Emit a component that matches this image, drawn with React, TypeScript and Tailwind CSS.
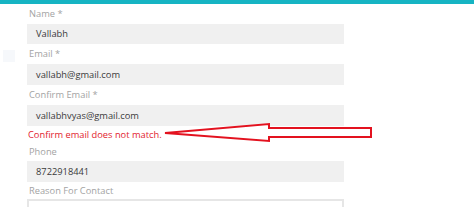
import React from "react";

const font = { fontFamily: '"Open Sans", "Noto Sans", sans-serif' };

function Label({ text, className }: { text: string; className: string }) {
  return (
    <div className={`flex items-center pl-[2px] text-[9.3px] text-[#a3a3a3] ${className}`}>
      {text}
    </div>
  );
}

function Field({ value, className }: { value: string; className: string }) {
  return (
    <div className={`flex items-center bg-[#f0f0f0] pl-[9px] text-[9.3px] text-[#3a3a3a] ${className}`}>
      {value}
    </div>
  );
}

function Arrow() {
  return (
    <svg
      className="absolute left-[160px] top-[120px]"
      width="215"
      height="26"
      viewBox="0 0 215 26"
    >
      <polygon
        points="5,13 109,4 109,8 211,8 211,17 109,17 109,21"
        fill="#ffffff"
        stroke="#e3121f"
        strokeWidth="2"
        strokeLinejoin="miter"
      />
    </svg>
  );
}

export default function App() {
  return (
    <div className="relative h-[207px] w-[474px] overflow-hidden bg-white" style={font}>
      <div className="h-[4px] bg-[#16b4c3]" />
      <div className="absolute left-[3px] top-[50px] h-[12px] w-[12px] bg-[#f6f8fb]" />
      <div className="ml-[27px] flex w-[317px] flex-col">
        <Label text="Name *" className="h-[20px]" />
        <Field value="Vallabh" className="h-[20px]" />
        <Label text="Email *" className="h-[20px]" />
        <Field value="vallabh@gmail.com" className="h-[21px]" />
        <Label text="Confirm Email *" className="h-[20px]" />
        <Field value="vallabhvyas@gmail.com" className="h-[21px]" />
        <div className="flex h-[17px] items-center pl-[1px] text-[9.3px] text-[#e2222e]">
          Confirm email does not match.
        </div>
        <Label text="Phone" className="h-[18px]" />
        <Field value="8722918441" className="h-[21px]" />
        <Label text="Reason For Contact" className="h-[17px]" />
        <div className="h-[30px] border-2 border-[#e6e6e6] bg-white" />
      </div>
      <Arrow />
    </div>
  );
}
